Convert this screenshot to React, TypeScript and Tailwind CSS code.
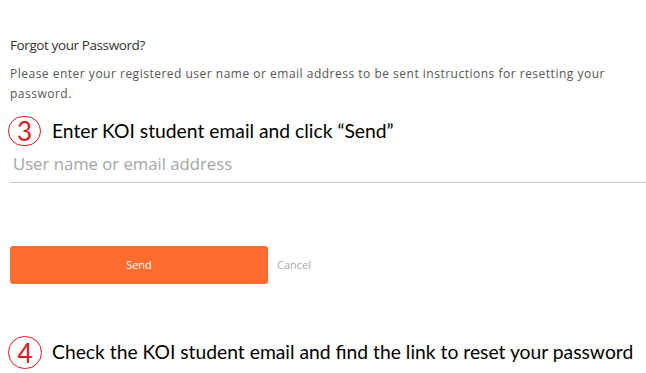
import React from "react";

function Step({ n, size, children }: { n: string; size: string; children: React.ReactNode }) {
  return (
    <div className="flex items-center">
      <span
        className={`ml-[8px] flex items-center justify-center rounded-full border-[1.5px] border-[#e3161f] text-[26px] leading-none text-[#e3161f] ${size}`}
      >
        {n}
      </span>
      <span className="ml-auto w-[594px] text-[19.3px] text-black">{children}</span>
    </div>
  );
}

export default function App() {
  return (
    <div className="h-[373px] w-[646px] overflow-hidden bg-white font-['Lato',sans-serif]">
      <div className="px-[10px] pt-[35px] font-['Open_Sans',sans-serif]">
        <h2 className="text-[13.5px] leading-[20px] tracking-[-0.4px] text-[#333]">Forgot your Password?</h2>
        <p className="mt-[9px] pr-[30px] text-[12px] leading-[20px] tracking-[0.5px] text-[#555]">
          Please enter your registered user name or email address to be sent instructions for resetting your password.
        </p>
      </div>

      <div className="mt-[12px]">
        <Step n="3" size="h-[30px] w-[33px]">Enter KOI student email and click “Send”</Step>
      </div>

      <div className="pl-[10px] font-['Open_Sans',sans-serif]">
        <input
          placeholder="User name or email address"
          className="mt-[6px] w-full border-b border-[#c8c8c8] px-[3px] pb-[6px] text-[16.7px] leading-[24px] outline-none placeholder:text-[#a5a5a5]"
        />
        <div className="mt-[63px] flex items-center">
          <button className="h-[38px] w-[258px] rounded-[3px] bg-[#ff6d2e] text-[11px] text-white">Send</button>
          <span className="ml-[9px] text-[11px] text-[#aaa]">Cancel</span>
        </div>
      </div>

      <div className="mt-[52px]">
        <Step n="4" size="h-[33px] w-[34px]">Check the KOI student email and find the link to reset your password</Step>
      </div>
    </div>
  );
}
